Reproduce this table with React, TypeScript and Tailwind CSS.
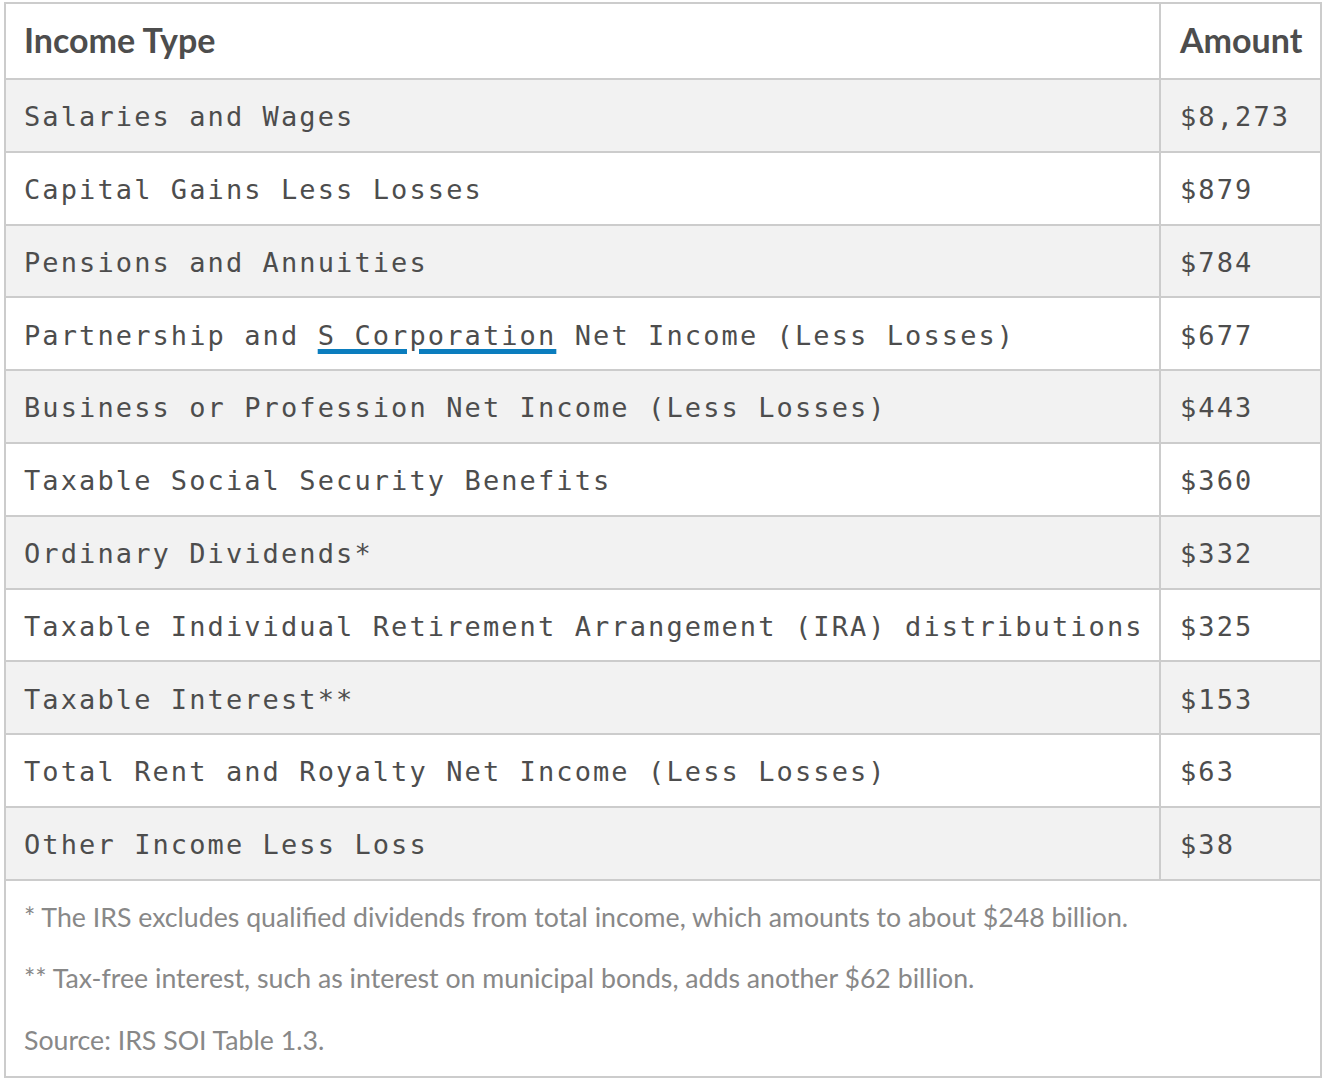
import React from "react";

const rows: { label: React.ReactNode; amount: string }[] = [
  { label: "Salaries and Wages", amount: "$8,273" },
  { label: "Capital Gains Less Losses", amount: "$879" },
  { label: "Pensions and Annuities", amount: "$784" },
  {
    label: (
      <>
        Partnership and{" "}
        <a
          href="#"
          className="underline decoration-[#0b7dbe] decoration-[5px] underline-offset-[4px]"
        >
          S Corporation
        </a>{" "}
        Net Income (Less Losses)
      </>
    ),
    amount: "$677",
  },
  { label: "Business or Profession Net Income (Less Losses)", amount: "$443" },
  { label: "Taxable Social Security Benefits", amount: "$360" },
  { label: "Ordinary Dividends*", amount: "$332" },
  { label: "Taxable Individual Retirement Arrangement (IRA) distributions", amount: "$325" },
  { label: "Taxable Interest**", amount: "$153" },
  { label: "Total Rent and Royalty Net Income (Less Losses)", amount: "$63" },
  { label: "Other Income Less Loss", amount: "$38" },
];

const mono = "font-['DejaVu_Sans_Mono',monospace] text-[27px] tracking-[2.1px] text-[#4d4d4d] pt-[4px]";

export default function App() {
  return (
    <div className="bg-white pt-[2px] pl-[4px] min-h-[1080px]">
      <div className="w-[1318px] border-2 border-[#cccccc] font-['Lato',sans-serif]">
        <div className="flex h-[74px]">
          <div className="w-[1155px] border-r-2 border-[#cccccc] flex items-center pl-[18px] pb-[3px] text-[34px] font-bold text-[#4d4d4d]">
            Income Type
          </div>
          <div className="flex-1 flex items-center pl-[19px] pb-[3px] text-[34px] font-bold text-[#4d4d4d]">
            Amount
          </div>
        </div>
        {rows.map((r, i) => (
          <div
            key={i}
            className={`flex h-[72.8px] border-t-2 border-[#cccccc] ${i % 2 === 0 ? "bg-[#f2f2f2]" : "bg-white"}`}
          >
            <div className={`w-[1155px] border-r-2 border-[#cccccc] flex items-center pl-[18px] ${mono}`}>
              <span>{r.label}</span>
            </div>
            <div className={`flex-1 flex items-center pl-[19px] ${mono}`}>{r.amount}</div>
          </div>
        ))}
        <div className="border-t-2 border-[#cccccc] h-[197.2px] pl-[18px] py-[21px] flex flex-col gap-[31.5px] text-[26.7px] leading-[30px] text-[#888888]">
          <p>* The IRS excludes qualified dividends from total income, which amounts to about $248 billion.</p>
          <p>** Tax-free interest, such as interest on municipal bonds, adds another $62 billion.</p>
          <p>Source: IRS SOI Table 1.3.</p>
        </div>
      </div>
    </div>
  );
}
